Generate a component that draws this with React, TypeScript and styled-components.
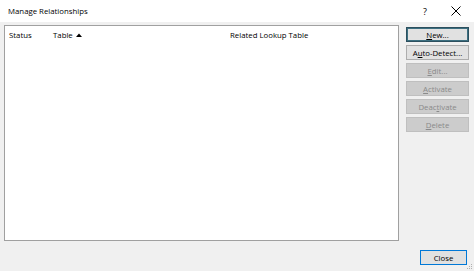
import React from "react";
import styled, { createGlobalStyle } from "styled-components";

const Global = createGlobalStyle`
  html, body { margin: 0; padding: 0; background: #f0f0f0; }
  body { font-family: "Open Sans", "Noto Sans", sans-serif; }
`;

const Window = styled.div`
  width: 474px;
  height: 271px;
  display: flex;
  flex-direction: column;
  background: #f0f0f0;
  font-size: 8px;
  color: #000;
  overflow: hidden;
  position: relative;
`;

const TitleBar = styled.div`
  height: 22px;
  background: #ffffff;
  display: flex;
  align-items: center;
  padding-left: 8px;
`;

const Title = styled.div`
  flex: 1;
  font-size: 7.8px;
  color: #000;
`;

const TitleButton = styled.div<{ $w: number }>`
  width: ${(p) => p.$w}px;
  height: 22px;
  display: flex;
  align-items: center;
  justify-content: center;
  font-size: 9px;
  color: #000;
`;

const Body = styled.div`
  flex: 1;
  display: flex;
  flex-direction: column;
  padding: 3px 5px 0 4px;
`;

const MainRow = styled.div`
  display: flex;
  gap: 7px;
  height: 216px;
`;

const ListBox = styled.div`
  flex: 1;
  background: #ffffff;
  border: 1px solid #a0a0a0;
  box-sizing: border-box;
`;

const HeaderRow = styled.div`
  display: flex;
  height: 17px;
  align-items: center;
`;

const HeaderCell = styled.div<{ $w: number }>`
  width: ${(p) => p.$w}px;
  padding-left: 4px;
  box-sizing: border-box;
  display: flex;
  align-items: center;
  gap: 3px;
  font-size: 7.8px;
`;

const ButtonColumn = styled.div`
  width: 63px;
  display: flex;
  flex-direction: column;
  gap: 3px;
  padding-top: 2px;
`;

const Btn = styled.div<{ $disabled?: boolean; $default?: boolean }>`
  height: 15px;
  box-sizing: border-box;
  display: flex;
  align-items: center;
  justify-content: center;
  font-size: 7.8px;
  background: ${(p) => (p.$disabled ? "#cccccc" : "#e1e1e1")};
  color: ${(p) => (p.$disabled ? "#8a8a8a" : "#000")};
  border: 1px solid
    ${(p) => (p.$default ? "#2c4f5e" : p.$disabled ? "#bfbfbf" : "#adadad")};
  box-shadow: ${(p) => (p.$default ? "inset 0 0 0 1px #3c6f80" : "none")};
`;

const U = styled.span`
  text-decoration: underline;
`;

const BottomRow = styled.div`
  display: flex;
  justify-content: flex-end;
  padding-top: 9px;
  padding-right: 2px;
`;

const CloseBtn = styled.div`
  width: 47px;
  height: 15px;
  box-sizing: border-box;
  display: flex;
  align-items: center;
  justify-content: center;
  font-size: 7.8px;
  background: #e1e1e1;
  border: 1px solid #0078d7;
`;

const Grip = styled.svg`
  position: absolute;
  right: 1px;
  bottom: 1px;
`;

export default function App() {
  return (
    <Window>
      <Global />
      <TitleBar>
        <Title>Manage Relationships</Title>
        <TitleButton $w={26}>?</TitleButton>
        <TitleButton $w={36}>
          <svg width="10" height="10" viewBox="0 0 10 10">
            <path d="M0.5 0.5 L9.5 9.5 M9.5 0.5 L0.5 9.5" stroke="#000" strokeWidth="1" />
          </svg>
        </TitleButton>
      </TitleBar>
      <Body>
        <MainRow>
          <ListBox>
            <HeaderRow>
              <HeaderCell $w={44}>Status</HeaderCell>
              <HeaderCell $w={177}>
                Table
                <svg width="6" height="4" viewBox="0 0 6 4">
                  <path d="M0 4 L3 0.5 L6 4 Z" fill="#000" />
                </svg>
              </HeaderCell>
              <HeaderCell $w={170}>Related Lookup Table</HeaderCell>
            </HeaderRow>
          </ListBox>
          <ButtonColumn>
            <Btn $default>
              <U>N</U>ew...
            </Btn>
            <Btn>
              A<U>u</U>to-Detect...
            </Btn>
            <Btn $disabled>
              <U>E</U>dit...
            </Btn>
            <Btn $disabled>
              <U>A</U>ctivate
            </Btn>
            <Btn $disabled>
              Deac<U>t</U>ivate
            </Btn>
            <Btn $disabled>
              <U>D</U>elete
            </Btn>
          </ButtonColumn>
        </MainRow>
        <BottomRow>
          <CloseBtn>Close</CloseBtn>
        </BottomRow>
      </Body>
      <Grip width="6" height="6" viewBox="0 0 6 6">
        <rect x="4" y="0" width="1" height="1" fill="#b0b0b0" />
        <rect x="2" y="2" width="1" height="1" fill="#b0b0b0" />
        <rect x="4" y="2" width="1" height="1" fill="#b0b0b0" />
        <rect x="0" y="4" width="1" height="1" fill="#b0b0b0" />
        <rect x="2" y="4" width="1" height="1" fill="#b0b0b0" />
        <rect x="4" y="4" width="1" height="1" fill="#b0b0b0" />
      </Grip>
    </Window>
  );
}
